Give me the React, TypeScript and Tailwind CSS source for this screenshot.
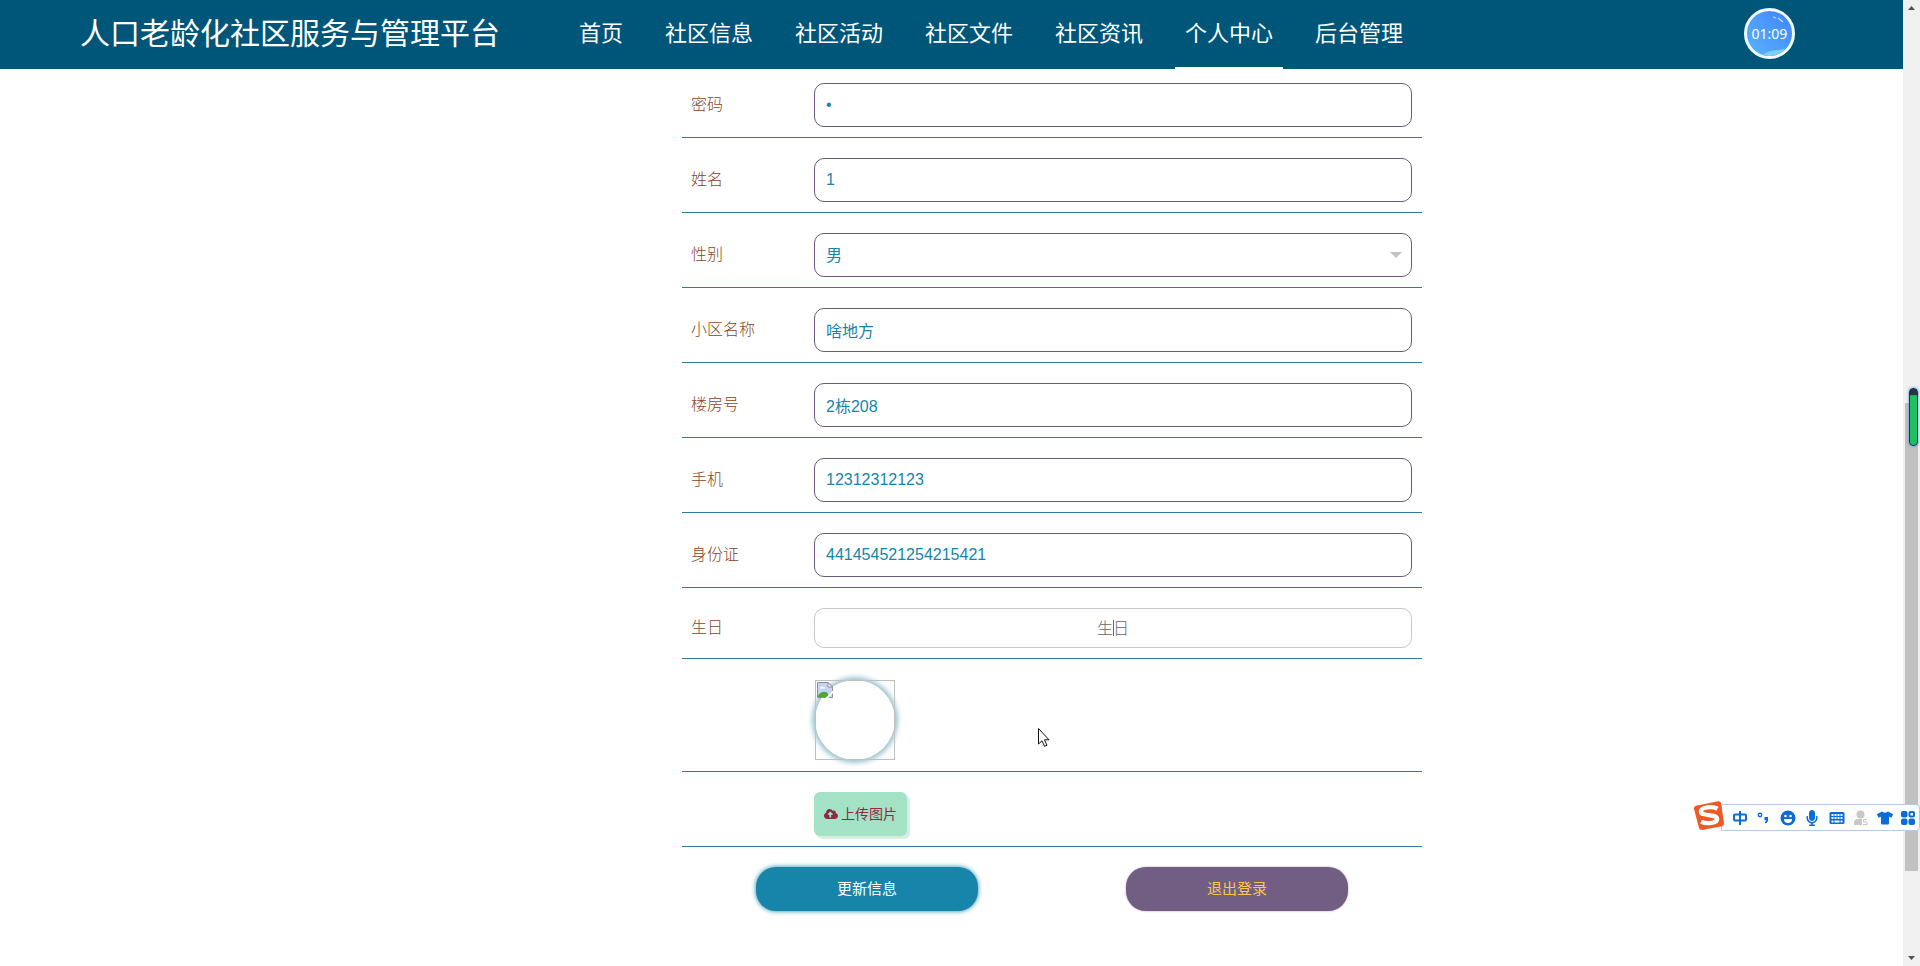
import { useState } from 'react';
import { FaCloudUploadAlt, FaMicrophone, FaTshirt } from 'react-icons/fa';

const navItems = ['首页', '社区信息', '社区活动', '社区文件', '社区资讯', '个人中心', '后台管理'];

const inputClass =
  "block h-11 w-full rounded-[10px] border border-[#6b5b7b] bg-white px-[11px] font-['Liberation_Sans','Noto_Sans_CJK_SC',sans-serif] text-base text-[#1685a9] outline-none";

function FormRow({ label, id, children }: { label?: string; id?: string; children: React.ReactNode }) {
  return (
    <div className="flex items-center border-b border-[#2f7d9a] pt-5 pr-2.5 pb-2.5 pl-[9px]">
      <div className="w-[123px] shrink-0 pb-0.5">
        {label && (
          <label htmlFor={id} className="text-base font-light text-[#8a4528]">
            {label}
          </label>
        )}
      </div>
      <div className="min-w-0 flex-1">{children}</div>
    </div>
  );
}

function BrokenImage() {
  return (
    <div className="p-px">
      <div className="relative size-20">
        <div className="absolute inset-0 rounded-full shadow-[0_0_5px_3px_#9cc3d0]"></div>
        <div className="absolute inset-0 border border-[#c0c0c0]"></div>
        <svg className="absolute top-0.5 left-0.5 size-4" viewBox="0 0 16 16">
          <path d="M.5 .5H11l4.500 4.500v10.500H.5z" fill="#c6d5f4" stroke="#8f8f8f" />
          <path d="M11 .5V5h4.500z" fill="#fff" stroke="#8f8f8f" />
          <path d="M3 6.500c0-2 2-2 2.500-1.200C6.500 4.500 8 5 8 6.500z" fill="#fff" />
          <path d="M1 15v-1.500C3.500 9.500 7 9 10 10.500L12.500 15z" fill="#4ea832" />
          <path d="M8.500 16L16 8.500V11l-4.500 5z" fill="#fff" />
        </svg>
      </div>
    </div>
  );
}

function Clock() {
  return (
    <div className="relative flex size-[51px] items-center justify-center overflow-hidden rounded-full border-3 border-[#f0faff] bg-linear-to-bl from-[#3f83fb] to-[#5cb4ff]">
      <svg className="absolute inset-0 size-full" viewBox="0 0 45 45">
        <path d="M16 44C22 38 31 40 38 37.500C35 43 29 45 22 45z" fill="#7fd0ff" />
        <path d="M26 6l3 .8M31 7l5 4" stroke="#b9e0ff" strokeWidth="1.200" fill="none" />
      </svg>
      <span className="relative text-sm text-white">01:09</span>
    </div>
  );
}

function ImeBar() {
  return (
    <div className="fixed top-[800px] right-0 flex items-end">
      <svg className="z-10 -mr-1 h-[31px] w-8" viewBox="0 0 32 32" preserveAspectRatio="none">
        <path d="M3 6L25 1.200Q27.500 1 28 3L31 24Q31 26.500 29 27L9 31Q6.500 31 6 29L1 9Q.5 7 3 6z" fill="#ee5a24" />
        <path
          d="M24.500 9C19 6 8 7.500 8 12c0 5 15.500 2 16 7.500c.3 4.500-10 5.500-16 3"
          stroke="#fff"
          strokeWidth="4.500"
          fill="none"
        />
      </svg>
      <div className="flex h-[27px] w-[199px] items-center justify-between rounded-r-sm border border-[#b4cde6] bg-white pr-1 pl-2.5 text-[#0a6cd6]">
        <svg className="h-4 w-4" viewBox="0 0 16 16" fill="none" stroke="currentColor" strokeWidth="2">
          <rect x="2" y="4.500" width="12" height="6" rx="1" />
          <path d="M8 1v14" />
        </svg>
        <svg className="h-4 w-4" viewBox="0 0 16 16">
          <circle cx="4" cy="5" r="1.700" fill="none" stroke="currentColor" strokeWidth="1.400" />
          <path d="M8.500 7h3.500v3q0 2.500-3 3.500v-1.500q1.200-.5 1.200-1.800H8.500z" fill="currentColor" />
        </svg>
        <svg className="h-4 w-4" viewBox="0 0 16 16">
          <circle cx="8" cy="8" r="7.500" fill="currentColor" />
          <circle cx="5.500" cy="6" r="1.300" fill="#fff" />
          <circle cx="10.500" cy="6" r="1.300" fill="#fff" />
          <path d="M4 9h8a4 4 0 0 1-8 0z" fill="#fff" />
        </svg>
        <FaMicrophone className="size-4" />
        <svg className="h-4 w-4" viewBox="0 0 16 16">
          <rect x=".5" y="2" width="15" height="12" rx="1.500" fill="currentColor" />
          <path d="M2.500 5h11M2.500 8h11" stroke="#fff" strokeWidth="1.800" strokeDasharray="2 1" />
          <path d="M2.500 11.500h2M5.500 11.500h5M11.500 11.500h2" stroke="#fff" strokeWidth="1.800" />
        </svg>
        <svg className="h-4 w-4 text-[#c8c8c8]" viewBox="0 0 16 16">
          <circle cx="7.500" cy="4.500" r="4" fill="currentColor" />
          <path d="M1 15v-2q0-4 4-4h5q3 0 4 3v3z" fill="currentColor" />
          <path d="M9 8h6v8H9z" fill="#fff" />
          <path d="M14 9.500h-3.500v2.500H14v2.500h-4" stroke="currentColor" fill="none" />
        </svg>
        <FaTshirt className="size-4" />
        <svg className="size-3.5" viewBox="0 0 14 14" fill="currentColor">
          <rect x="0" y="0" width="6.500" height="6.500" rx="2" />
          <rect x="8.500" y="1" width="4.500" height="4.500" rx="1" fill="none" stroke="currentColor" strokeWidth="2" />
          <rect x="0" y="7.500" width="6.500" height="6.500" rx="2" />
          <rect x="7.500" y="7.500" width="6.500" height="6.500" rx="2" />
        </svg>
      </div>
    </div>
  );
}

function ScrollTrack() {
  return (
    <div className="sticky top-0 flex h-screen w-[17px] shrink-0 flex-col items-center bg-[#f0f0f0]">
      <svg className="h-[17px] w-[17px] shrink-0" viewBox="0 0 17 17">
        <path d="M5 10h7L8.500 6z" fill="#505050" />
      </svg>
      <div className="flex-[386]"></div>
      <div className="w-[13px] flex-[468] bg-[#c1c1c1]"></div>
      <div className="flex-[78]"></div>
      <svg className="h-[17px] w-[17px] shrink-0" viewBox="0 0 17 17">
        <path d="M5 7h7l-3.500 4z" fill="#505050" />
      </svg>
    </div>
  );
}

export default function App() {
  const [form, setForm] = useState({
    password: '1',
    name: '1',
    gender: '男',
    community: '啥地方',
    building: '2栋208',
    phone: '12312312123',
    idCard: '441454521254215421',
    birthday: '',
  });

  const handleChange = (e: React.ChangeEvent<HTMLInputElement | HTMLSelectElement>) => {
    setForm({ ...form, [e.target.name]: e.target.value });
  };

  const textFields = [
    { name: 'community', label: '小区名称', value: form.community },
    { name: 'building', label: '楼房号', value: form.building },
    { name: 'phone', label: '手机', value: form.phone },
    { name: 'idCard', label: '身份证', value: form.idCard },
  ];

  return (
    <div className="flex min-h-screen bg-white font-['Noto_Sans','Noto_Sans_CJK_SC',sans-serif]">
      <div className="min-w-0 flex-1">
        {/* Header */}
        <header className="flex h-[69px] items-center bg-[#005678] pr-[108px] pl-20 text-white">
          <h1 className="w-[489px] shrink-0 pb-1 text-[30px]">人口老龄化社区服务与管理平台</h1>
          <nav className="flex h-full gap-[22px] text-[22px]">
            {navItems.map((item) => (
              <a
                key={item}
                href="#"
                className={
                  item === '个人中心'
                    ? 'flex items-center border-b-2 border-white px-2.5 pb-0.5'
                    : 'flex items-center border-b-2 border-transparent px-2.5 pb-0.5'
                }
              >
                {item}
              </a>
            ))}
          </nav>
          <div className="ml-auto pb-0.5">
            <Clock />
          </div>
        </header>

        {/* Form */}
        <main className="-mt-1.5 flex justify-center pl-[201px]">
          <form className="w-[740px]" onSubmit={(e) => e.preventDefault()}>
            <FormRow label="密码" id="password">
              <input id="password" name="password" type="password" className={inputClass} value={form.password} onChange={handleChange} />
            </FormRow>
            <FormRow label="姓名" id="name">
              <input id="name" name="name" className={inputClass} value={form.name} onChange={handleChange} />
            </FormRow>
            <FormRow label="性别" id="gender">
              <div className="relative">
                <select id="gender" name="gender" className={`${inputClass} appearance-none pt-0.5`} value={form.gender} onChange={handleChange}>
                  <option>男</option>
                  <option>女</option>
                </select>
                <svg className="pointer-events-none absolute top-[19px] right-2.5 h-1.5 w-3" viewBox="0 0 12 6">
                  <path d="M0 0h12L6 6z" fill="#c2c2c2" />
                </svg>
              </div>
            </FormRow>
            {textFields.map((field) => (
              <FormRow key={field.name} label={field.label} id={field.name}>
                <input id={field.name} name={field.name} className={inputClass} value={field.value} onChange={handleChange} />
              </FormRow>
            ))}
            <FormRow label="生日" id="birthday">
              <div className="relative">
                <input
                  id="birthday"
                  name="birthday"
                  placeholder="生日"
                  className="block h-10 w-full rounded-[10px] border border-[#c8c8cc] px-[11px] text-center text-base font-light text-[#1685a9] outline-none placeholder:text-[#666666]"
                  value={form.birthday}
                  onChange={handleChange}
                />
                <span className="absolute top-3 left-1/2 h-4 w-px bg-[#1685a9]"></span>
              </div>
            </FormRow>
            <FormRow>
              <BrokenImage />
            </FormRow>
            <FormRow>
              <button
                type="button"
                className="flex h-11 w-[93px] items-center justify-center gap-[3px] rounded-md bg-[#a4e2c6] text-sm text-[#8c2a42] shadow-[3px_3px_1px_#d3efe3]"
              >
                <FaCloudUploadAlt className="size-3.5" />
                上传图片
              </button>
            </FormRow>

            {/* Actions */}
            <div className="grid grid-cols-2 justify-items-center pt-5 text-[15px]">
              <button type="submit" className="h-11 w-3/5 rounded-[20px] bg-[#1685a9] pb-0.5 text-white shadow-[0_0_5px_#1685a9]">
                更新信息
              </button>
              <button type="button" className="h-11 w-3/5 rounded-[20px] bg-[#725e82] pb-0.5 text-[#ffc64b] shadow-[0_0_2px_#a98bc0]">
                退出登录
              </button>
            </div>
          </form>
        </main>
      </div>

      <ScrollTrack />

      {/* Floating widgets */}
      <div className="fixed top-[388px] right-[2px] h-[58px] w-[9px] rounded-sm border border-[#12306b] bg-linear-to-b from-[#2a3440] from-10% to-[#1fc05f] to-12% shadow-[0_0_3px_#4a90e2]"></div>
      <ImeBar />
      <svg className="pointer-events-none fixed top-[727px] left-[1037px] h-5 w-3.5" viewBox="0 0 14 20">
        <path d="M1.500 1.500v15.500l3.500-3.200l2.500 5.500l2.500-1l-2.500-5.500h4.500z" fill="#fff" stroke="#111" />
      </svg>
    </div>
  );
}
